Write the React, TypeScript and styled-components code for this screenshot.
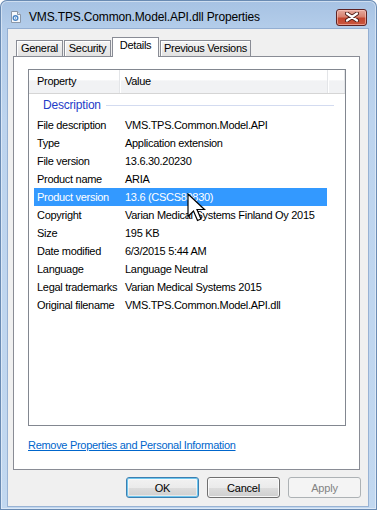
import React from 'react';
import styled, { createGlobalStyle } from 'styled-components';

const Global = createGlobalStyle`
  html, body { margin: 0; padding: 0; width: 377px; height: 510px; overflow: hidden; background: #fff; }
  body { font-family: "Liberation Sans", Arial, sans-serif; font-size: 11px; color: #000; }
  #root { width: 377px; height: 510px; }
`;

const Window = styled.div`
  position: relative;
  width: 377px;
  height: 510px;
  box-sizing: border-box;
  display: flex;
  flex-direction: column;
  border-radius: 7px 7px 0 0;
  background: linear-gradient(to bottom, #a6c2e3 0px, #b4cdea 29px, #bdd4ee 120px, #c2d8f0 100%);
  box-shadow: inset 0 0 0 1px #6a8bb3, inset 0 0 0 2px rgba(255, 255, 255, 0.45);
`;

const TitleBar = styled.div`
  height: 29px;
  box-sizing: border-box;
  padding: 5px 10px 0 11px;
  display: flex;
  align-items: center;
`;

const TitleText = styled.div`
  flex: 1;
  margin-left: 8px;
  font-size: 12px;
  letter-spacing: -0.15px;
  color: #000;
  white-space: nowrap;
`;

const CloseButton = styled.div`
  width: 31px;
  height: 17px;
  box-sizing: border-box;
  border: 1px solid #5e2323;
  border-radius: 3px;
  background: linear-gradient(to bottom, #e6aa9f 0%, #d7816f 45%, #c4462f 55%, #c9573f 100%);
  box-shadow: inset 0 0 0 1px rgba(255, 210, 200, 0.55);
  display: flex;
  align-items: center;
  justify-content: center;
`;

const Client = styled.div`
  flex: 1;
  margin: 0 9px 4px 8px;
  background: #f0f0f0;
  padding: 8px 0 0 5px;
  display: flex;
  flex-direction: column;
  box-shadow: 0 0 0 1px rgba(120, 150, 190, 0.55);
`;

const TabStrip = styled.div`
  height: 20px;
  margin-bottom: -1px;
  padding-left: 3px;
  display: flex;
  align-items: flex-end;
  gap: 1px;
`;

const Tab = styled.div<{ $w: number; $selected?: boolean }>`
  width: ${(p) => p.$w}px;
  box-sizing: border-box;
  border: 1px solid #898c95;
  border-bottom: none;
  text-align: center;
  white-space: nowrap;
  letter-spacing: -0.3px;
  ${(p) =>
    p.$selected
      ? `
    position: relative;
    z-index: 1;
    height: 20px;
    line-height: 15px;
    background: #fff;
  `
      : `
    height: 16px;
    margin-bottom: 1px;
    line-height: 15px;
    background: linear-gradient(to bottom, #f4f4f4 0%, #ebebeb 50%, #e2e2e2 100%);
    box-shadow: inset 1px 1px 0 #fff;
  `}
`;

const Panel = styled.div`
  width: 347px;
  height: 414px;
  box-sizing: border-box;
  border: 1px solid #898c95;
  background: #fff;
  padding: 12px 0 0 14px;
  display: flex;
  flex-direction: column;
`;

const ListView = styled.div`
  width: 318px;
  height: 357px;
  box-sizing: border-box;
  border: 1px solid #828790;
  overflow: hidden;
`;

const Header = styled.div`
  height: 24px;
  box-sizing: border-box;
  display: flex;
  border-bottom: 1px solid #d5d5d5;
  background: linear-gradient(to bottom, #ffffff 0%, #ffffff 45%, #f1f2f4 46%, #f1f2f4 100%);
`;

const HeaderCell = styled.div<{ $w?: number; $pad: number }>`
  ${(p) => (p.$w ? `width: ${p.$w}px;` : 'flex: 1;')}
  box-sizing: border-box;
  padding-left: ${(p) => p.$pad}px;
  line-height: 23px;
  letter-spacing: -0.3px;
  border-right: 1px solid #e3e5e8;
  box-shadow: 1px 0 0 #fff;
`;

const GroupRow = styled.div`
  height: 22px;
  display: flex;
  align-items: center;
  padding: 0 11px 0 14px;
  gap: 5px;
`;

const GroupTitle = styled.span`
  color: #1e3cc8;
  font-size: 12px;
  letter-spacing: -0.2px;
`;

const GroupLine = styled.div`
  flex: 1;
  height: 1px;
  background: #d3dbf0;
`;

const Row = styled.div<{ $selected?: boolean }>`
  margin-left: 5px;
  width: 293px;
  height: 18px;
  display: grid;
  grid-template-columns: 91px 1fr;
  align-items: center;
  white-space: nowrap;
  letter-spacing: -0.3px;
  background: ${(p) => (p.$selected ? '#3399ff' : 'transparent')};
  color: ${(p) => (p.$selected ? '#fff' : '#000')};
`;

const PropCell = styled.span`
  padding-left: 3px;
`;

const ValueCell = styled.span``;

const Link = styled.a`
  margin-top: 13px;
  line-height: 13px;
  color: #0066cc;
  text-decoration: underline;
  letter-spacing: -0.3px;
  white-space: nowrap;
  align-self: flex-start;
  cursor: pointer;
`;

const ButtonRow = styled.div`
  margin-top: 7px;
  padding-right: 7px;
  display: flex;
  justify-content: flex-end;
  gap: 8px;
`;

const Button = styled.div<{ $default?: boolean; $disabled?: boolean }>`
  width: 73px;
  height: 21px;
  box-sizing: border-box;
  border-radius: 3px;
  display: flex;
  align-items: center;
  justify-content: center;
  letter-spacing: -0.2px;
  border: 1px solid ${(p) => (p.$disabled ? '#adb2b5' : p.$default ? '#3c7fb1' : '#707070')};
  color: ${(p) => (p.$disabled ? '#838383' : '#000')};
  background: ${(p) =>
    p.$disabled
      ? '#f4f4f4'
      : 'linear-gradient(to bottom, #f2f2f2 0%, #ebebeb 50%, #dddddd 51%, #cfcfcf 100%)'};
  box-shadow: ${(p) =>
    p.$disabled
      ? 'none'
      : p.$default
      ? 'inset 0 0 0 1px #6ec6ee, inset 0 0 0 2px rgba(255,255,255,0.5)'
      : 'inset 0 0 0 1px rgba(255,255,255,0.8)'};
`;

const Cursor = styled.svg`
  position: absolute;
  left: 187px;
  top: 193px;
  pointer-events: none;
`;

const rows: [string, string][] = [
  ['File description', 'VMS.TPS.Common.Model.API'],
  ['Type', 'Application extension'],
  ['File version', '13.6.30.20230'],
  ['Product name', 'ARIA'],
  ['Product version', '13.6 (CSCS80830)'],
  ['Copyright', 'Varian Medical Systems Finland Oy 2015'],
  ['Size', '195 KB'],
  ['Date modified', '6/3/2015 5:44 AM'],
  ['Language', 'Language Neutral'],
  ['Legal trademarks', 'Varian Medical Systems 2015'],
  ['Original filename', 'VMS.TPS.Common.Model.API.dll'],
];

const FileIcon = () => (
  <svg width="10" height="12" viewBox="0 0 10 12">
    <path d="M0.5 0.5 H6.5 L9.5 3.5 V11.5 H0.5 Z" fill="#f7f9fc" stroke="#8a97a8" />
    <path d="M6.5 0.5 V3.5 H9.5" fill="#dfe5ee" stroke="#8a97a8" />
    <circle cx="4.5" cy="7" r="2.3" fill="none" stroke="#4b86c5" strokeWidth="1.4" />
    <circle cx="4.5" cy="7" r="0.7" fill="#4b86c5" />
  </svg>
);

const CloseGlyph = () => (
  <svg width="14" height="10" viewBox="0 0 14 10">
    <path d="M2 1.5 L12 8.5 M12 1.5 L2 8.5" stroke="#4a1a16" strokeWidth="4" strokeLinecap="round" />
    <path d="M2 1.5 L12 8.5 M12 1.5 L2 8.5" stroke="#ffffff" strokeWidth="2.2" strokeLinecap="round" />
  </svg>
);

export default function App() {
  return (
    <>
      <Global />
      <Window>
        <TitleBar>
          <FileIcon />
          <TitleText>VMS.TPS.Common.Model.API.dll Properties</TitleText>
          <CloseButton>
            <CloseGlyph />
          </CloseButton>
        </TitleBar>
        <Client>
          <TabStrip>
            <Tab $w={47}>General</Tab>
            <Tab $w={47}>Security</Tab>
            <Tab $w={47} $selected>
              Details
            </Tab>
            <Tab $w={91}>Previous Versions</Tab>
          </TabStrip>
          <Panel>
            <ListView>
              <Header>
                <HeaderCell $w={91} $pad={8}>
                  Property
                </HeaderCell>
                <HeaderCell $w={208} $pad={5}>
                  Value
                </HeaderCell>
                <HeaderCell $pad={0} />
              </Header>
              <GroupRow>
                <GroupTitle>Description</GroupTitle>
                <GroupLine />
              </GroupRow>
              {rows.map(([k, v]) => (
                <Row key={k} $selected={k === 'Product version'}>
                  <PropCell>{k}</PropCell>
                  <ValueCell>{v}</ValueCell>
                </Row>
              ))}
            </ListView>
            <Link>Remove Properties and Personal Information</Link>
          </Panel>
          <ButtonRow>
            <Button $default>OK</Button>
            <Button>Cancel</Button>
            <Button $disabled>Apply</Button>
          </ButtonRow>
        </Client>
        <Cursor width="20" height="30" viewBox="0 0 20 30">
          <path
            d="M1 1 L1 23.5 L6.5 18 L10.5 27.5 L14 26 L10 16.5 L17.5 16.5 Z"
            fill="#fff"
            stroke="#000"
            strokeWidth="1.2"
            strokeLinejoin="miter"
          />
        </Cursor>
      </Window>
    </>
  );
}
